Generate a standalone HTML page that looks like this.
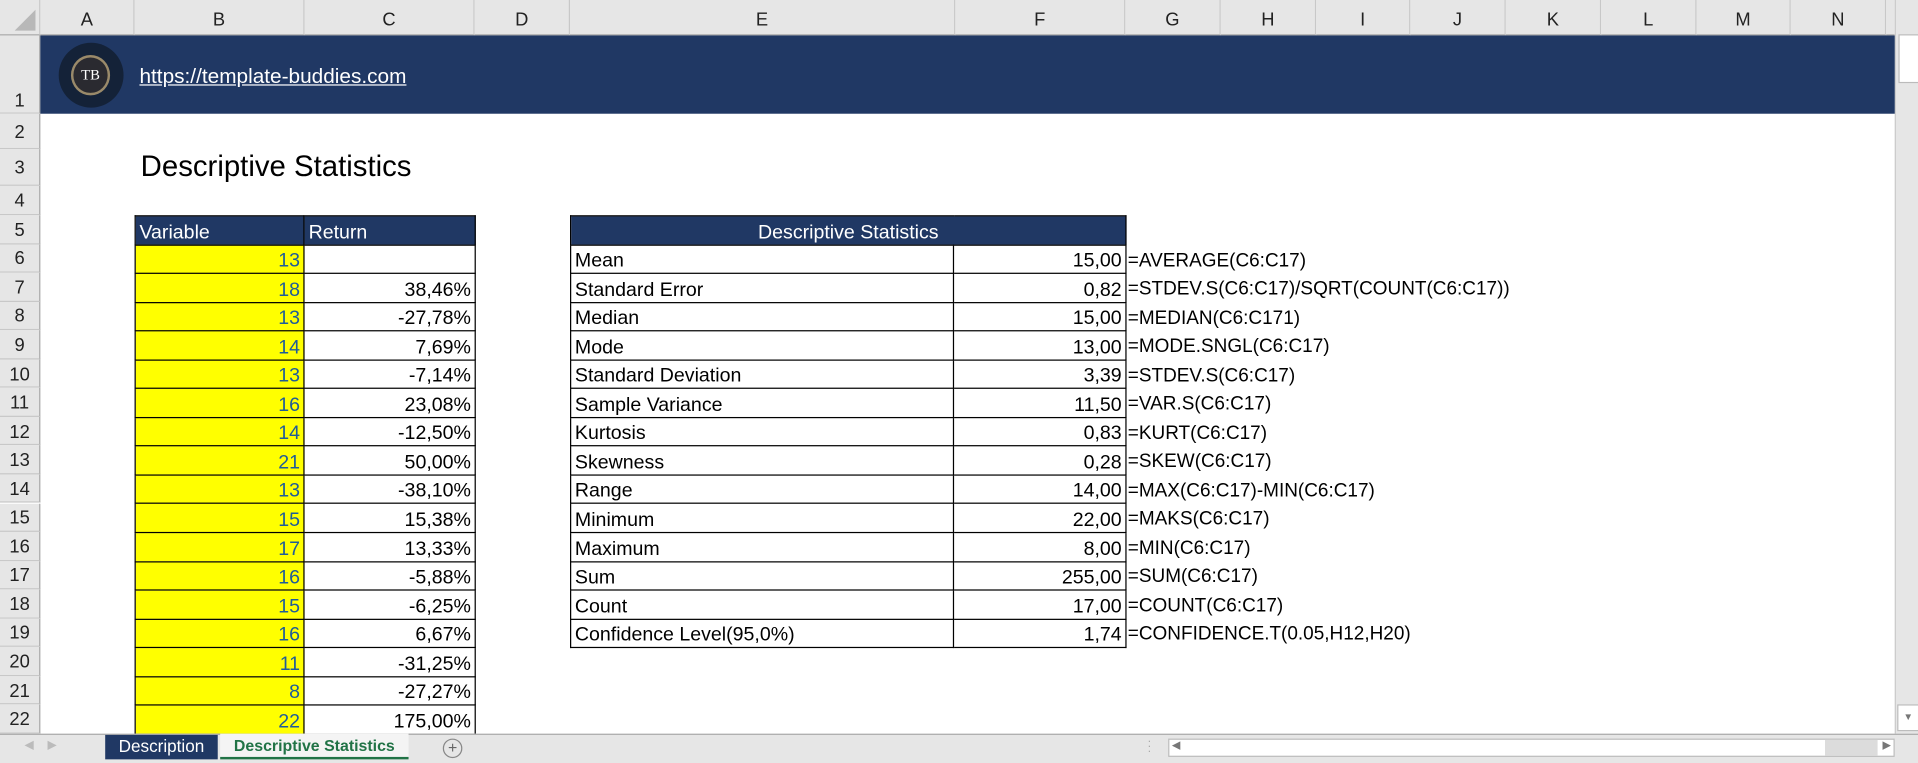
<!DOCTYPE html>
<html><head><meta charset="utf-8"><style>
html,body{margin:0;padding:0;width:1918px;height:763px;overflow:hidden;background:#fff}
#w{position:absolute;left:0;top:0;width:1568px;height:624px;transform:scale(1.2232,1.2228);transform-origin:0 0;font-family:"Liberation Sans",Arial,sans-serif;font-size:15px;color:#000}
.a{position:absolute}
.ch{position:absolute;top:0;height:29px;background:#e6e6e6;border-right:1px solid #c8c8c8;border-bottom:1px solid #aaa;box-sizing:border-box;text-align:center;line-height:33px;font-size:15px;color:#222}
.rh{position:absolute;left:0;width:33px;background:#e6e6e6;border-bottom:1px solid #c8c8c8;border-right:1px solid #aaa;box-sizing:border-box;text-align:center;font-size:15px;color:#222;display:flex;align-items:center;justify-content:center;padding-top:2px}
table{border-collapse:collapse;position:absolute}
tr{height:23.55px}
td{border:1px solid #000;padding:0 3px;line-height:18px;white-space:nowrap;font-size:16px;vertical-align:bottom}
.h td{background:#203864;color:#fff}
.y{background:#ffff00;color:#1f5c99;text-align:right}
.r{text-align:right}
.f{position:absolute;left:922px;font-size:15.5px;white-space:nowrap;line-height:20px}
</style></head><body><div id="w">
<div class="ch" style="left:0;width:33px"><div style="position:absolute;right:3px;bottom:3px;width:0;height:0;border-left:17px solid transparent;border-bottom:17px solid #b8b8b8"></div></div>
<div class="ch" style="left:33px;width:77px">A</div>
<div class="ch" style="left:110px;width:139px">B</div>
<div class="ch" style="left:249px;width:139px">C</div>
<div class="ch" style="left:388px;width:78px">D</div>
<div class="ch" style="left:466px;width:315px">E</div>
<div class="ch" style="left:781px;width:139px">F</div>
<div class="ch" style="left:920px;width:78px">G</div>
<div class="ch" style="left:998px;width:78px">H</div>
<div class="ch" style="left:1076px;width:77px">I</div>
<div class="ch" style="left:1153px;width:78px">J</div>
<div class="ch" style="left:1231px;width:78px">K</div>
<div class="ch" style="left:1309px;width:78px">L</div>
<div class="ch" style="left:1387px;width:77px">M</div>
<div class="ch" style="left:1464px;width:78px">N</div>
<div class="ch" style="left:1542px;width:7px;border-right:none"></div>
<div class="a" style="left:1549px;top:0;width:19px;height:600px;background:#e6e6e6;border-left:1px solid #ccc"><div style="position:absolute;left:2px;top:28px;width:15px;height:38px;background:#fff;border:1px solid #bbb"></div><div style="position:absolute;left:1px;top:576px;width:16px;height:20px;background:#fff;border:1px solid #bbb;font-size:8px;color:#777;text-align:center;line-height:20px">▼</div></div>

<div class="rh" style="top:29px;height:64px;align-items:flex-end;padding-bottom:1px">1</div>
<div class="rh" style="top:93px;height:29px">2</div>
<div class="rh" style="top:122px;height:30px">3</div>
<div class="rh" style="top:152px;height:24px">4</div>
<div class="rh" style="top:176px;height:23.55px">5</div>
<div class="rh" style="top:199.55px;height:23.55px">6</div>
<div class="rh" style="top:223.1px;height:23.55px">7</div>
<div class="rh" style="top:246.65px;height:23.55px">8</div>
<div class="rh" style="top:270.2px;height:23.55px">9</div>
<div class="rh" style="top:293.75px;height:23.55px">10</div>
<div class="rh" style="top:317.3px;height:23.55px">11</div>
<div class="rh" style="top:340.85px;height:23.55px">12</div>
<div class="rh" style="top:364.4px;height:23.55px">13</div>
<div class="rh" style="top:387.95px;height:23.55px">14</div>
<div class="rh" style="top:411.5px;height:23.55px">15</div>
<div class="rh" style="top:435.05px;height:23.55px">16</div>
<div class="rh" style="top:458.6px;height:23.55px">17</div>
<div class="rh" style="top:482.15px;height:23.55px">18</div>
<div class="rh" style="top:505.7px;height:23.55px">19</div>
<div class="rh" style="top:529.25px;height:23.55px">20</div>
<div class="rh" style="top:552.8px;height:23.55px">21</div>
<div class="rh" style="top:576.35px;height:23.65px">22</div>

<div class="a" style="left:33px;top:29px;width:1516px;height:64px;background:#203864"></div>
<div class="a" style="left:48px;top:35px;width:53px;height:53px;border-radius:50%;background:#142238"></div>
<div class="a" style="left:58px;top:45px;width:32px;height:33px;border-radius:50%;border:2px solid #9a8a6a;box-sizing:border-box;background:#2a2a30;color:#fff;font-family:'Liberation Serif',serif;font-size:12px;text-align:center;line-height:28px">TB</div>
<div class="a" style="left:114px;top:53px;color:#fff;font-size:17px;text-decoration:underline">https://template-buddies.com</div>
<div class="a" style="left:115px;top:123px;font-size:24px">Descriptive Statistics</div>

<table style="left:110px;top:176px;width:279px">
<tr class="h"><td style="width:139px">Variable</td><td style="width:140px">Return</td></tr>
<tr><td class="y">13</td><td class="r"></td></tr>
<tr><td class="y">18</td><td class="r">38,46%</td></tr>
<tr><td class="y">13</td><td class="r">-27,78%</td></tr>
<tr><td class="y">14</td><td class="r">7,69%</td></tr>
<tr><td class="y">13</td><td class="r">-7,14%</td></tr>
<tr><td class="y">16</td><td class="r">23,08%</td></tr>
<tr><td class="y">14</td><td class="r">-12,50%</td></tr>
<tr><td class="y">21</td><td class="r">50,00%</td></tr>
<tr><td class="y">13</td><td class="r">-38,10%</td></tr>
<tr><td class="y">15</td><td class="r">15,38%</td></tr>
<tr><td class="y">17</td><td class="r">13,33%</td></tr>
<tr><td class="y">16</td><td class="r">-5,88%</td></tr>
<tr><td class="y">15</td><td class="r">-6,25%</td></tr>
<tr><td class="y">16</td><td class="r">6,67%</td></tr>
<tr><td class="y">11</td><td class="r">-31,25%</td></tr>
<tr><td class="y">8</td><td class="r">-27,27%</td></tr>
<tr><td class="y">22</td><td class="r">175,00%</td></tr>
</table>

<table style="left:466px;top:176px;width:455px">
<tr class="h"><td colspan="2" style="text-align:center">Descriptive Statistics</td></tr>
<tr><td style="width:315px">Mean</td><td class="r" style="width:140px">15,00</td></tr>
<tr><td>Standard Error</td><td class="r">0,82</td></tr>
<tr><td>Median</td><td class="r">15,00</td></tr>
<tr><td>Mode</td><td class="r">13,00</td></tr>
<tr><td>Standard Deviation</td><td class="r">3,39</td></tr>
<tr><td>Sample Variance</td><td class="r">11,50</td></tr>
<tr><td>Kurtosis</td><td class="r">0,83</td></tr>
<tr><td>Skewness</td><td class="r">0,28</td></tr>
<tr><td>Range</td><td class="r">14,00</td></tr>
<tr><td>Minimum</td><td class="r">22,00</td></tr>
<tr><td>Maximum</td><td class="r">8,00</td></tr>
<tr><td>Sum</td><td class="r">255,00</td></tr>
<tr><td>Count</td><td class="r">17,00</td></tr>
<tr><td>Confidence Level(95,0%)</td><td class="r">1,74</td></tr>
</table>

<div class="f" style="top:203.5px">=AVERAGE(C6:C17)</div>
<div class="f" style="top:227px">=STDEV.S(C6:C17)/SQRT(COUNT(C6:C17))</div>
<div class="f" style="top:250.5px">=MEDIAN(C6:C171)</div>
<div class="f" style="top:274px">=MODE.SNGL(C6:C17)</div>
<div class="f" style="top:297.5px">=STDEV.S(C6:C17)</div>
<div class="f" style="top:321px">=VAR.S(C6:C17)</div>
<div class="f" style="top:344.5px">=KURT(C6:C17)</div>
<div class="f" style="top:368px">=SKEW(C6:C17)</div>
<div class="f" style="top:391.5px">=MAX(C6:C17)-MIN(C6:C17)</div>
<div class="f" style="top:415px">=MAKS(C6:C17)</div>
<div class="f" style="top:438.5px">=MIN(C6:C17)</div>
<div class="f" style="top:462px">=SUM(C6:C17)</div>
<div class="f" style="top:485.5px">=COUNT(C6:C17)</div>
<div class="f" style="top:509px">=CONFIDENCE.T(0.05,H12,H20)</div>

<div class="a" style="left:0;top:600px;width:1568px;height:24px;background:#e6e6e6;border-top:1px solid #aaa;box-sizing:border-box"></div>
<div class="a" style="left:20px;top:604px;color:#bbb;font-size:10px">◀&nbsp;&nbsp;&nbsp;&nbsp;▶</div>
<div class="a" style="left:86px;top:601px;width:92px;height:20px;background:#203864;color:#fff;font-size:14px;text-align:center;line-height:18px">Description</div>
<div class="a" style="left:180px;top:600px;width:154px;height:21px;background:#f4f4f4;border-bottom:2px solid #217346;color:#217346;font-weight:bold;font-size:13px;text-align:center;line-height:19px;box-sizing:border-box">Descriptive Statistics</div>
<div class="a" style="left:362px;top:604px;width:14px;height:14px;border:1px solid #888;border-radius:50%;color:#666;font-size:13px;text-align:center;line-height:14px">+</div>
<div class="a" style="left:938px;top:605px;color:#aaa;font-size:10px;line-height:4px">·<br>·<br>·</div>
<div class="a" style="left:955px;top:604px;width:594px;height:15px;background:#fff;border:1px solid #bbb;box-sizing:border-box"></div>
<div class="a" style="left:1492px;top:605px;width:43px;height:13px;background:#dcdcdc"></div>
<div class="a" style="left:958px;top:604px;color:#777;font-size:9px">◀</div>
<div class="a" style="left:1539px;top:604px;color:#777;font-size:9px">▶</div>
</div></body></html>
